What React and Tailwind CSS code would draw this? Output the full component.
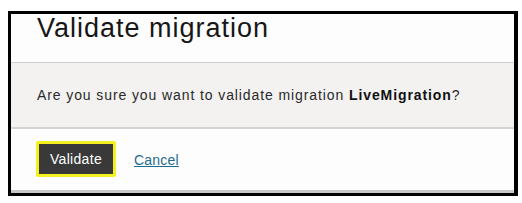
import React from 'react';

export default function App() {
  return (
    <div className="w-[522px] h-[203px] bg-white pt-[11px] pl-[8px]" style={{ fontFamily: '"Liberation Sans", Arial, sans-serif' }}>
      <div className="w-[510px] h-[185px] border-[3px] border-r-[4px] border-black bg-white flex flex-col">
        <div className="h-[49px] border-b border-[#cfcfcf] pl-[26px] bg-[#fdfdfd]">
          <h2 className="text-[27px] leading-[27px] tracking-[1px] text-[#161616] mt-[1px]">Validate migration</h2>
        </div>
        <div className="h-[66px] bg-[#f3f2f1] border-b-[2px] border-[#d4d4d4] pl-[26px] pt-[24px]">
          <p className="text-[14px] leading-[16px] tracking-[0.9px] text-[#2a2a2a]">
            Are you sure you want to validate migration <span className="font-bold text-[#111]">LiveMigration</span>?
          </p>
        </div>
        <div className="flex-1 flex items-start gap-[18px] pl-[25px] pt-[12px] bg-[#fdfdfd] border-b-[3px] border-[#c8c8c8]">
          <button className="h-[36px] w-[80px] bg-[#393939] border-[3px] border-[#f5f020] text-white text-[14px] tracking-[0.3px] rounded-[2px]">
            Validate
          </button>
          <a href="#" className="text-[14px] tracking-[0.2px] text-[#1e6b8c] underline mt-[9px]">Cancel</a>
        </div>
      </div>
    </div>
  );
}
